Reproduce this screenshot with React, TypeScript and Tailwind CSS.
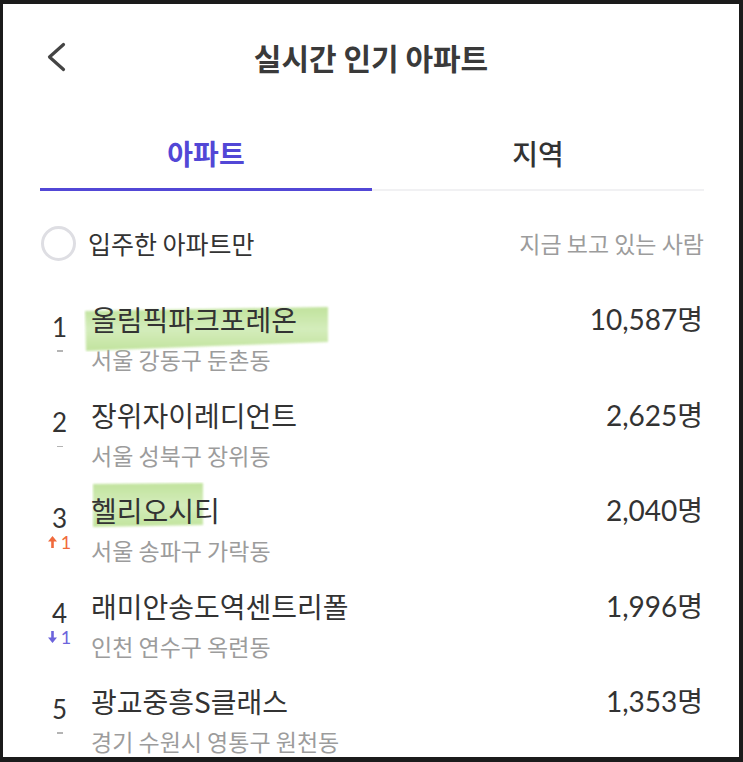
import React from "react";

const KR = "font-['Noto_Sans_CJK_KR',sans-serif]";
const NUM = "font-['Lato','Noto_Sans_CJK_KR',sans-serif]";

type Row = {
  rank: number;
  change: "none" | "up" | "down";
  delta?: number;
  name: string;
  area: string;
  count: string;
  hl?: "wide" | "short";
};

const rows: Row[] = [
  { rank: 1, change: "none", name: "올림픽파크포레온", area: "서울 강동구 둔촌동", count: "10,587명", hl: "wide" },
  { rank: 2, change: "none", name: "장위자이레디언트", area: "서울 성북구 장위동", count: "2,625명" },
  { rank: 3, change: "up", delta: 1, name: "헬리오시티", area: "서울 송파구 가락동", count: "2,040명", hl: "short" },
  { rank: 4, change: "down", delta: 1, name: "래미안송도역센트리폴", area: "인천 연수구 옥련동", count: "1,996명" },
  { rank: 5, change: "none", name: "광교중흥S클래스", area: "경기 수원시 영통구 원천동", count: "1,353명" },
];

function Arrow({ dir, color }: { dir: "up" | "down"; color: string }) {
  return (
    <svg width="9" height="12" viewBox="0 0 9 12" className={dir === "down" ? "rotate-180" : ""}>
      <path d="M4.5 0 L9 5.5 H5.8 V12 H3.2 V5.5 H0 Z" fill={color} />
    </svg>
  );
}

function Highlight({ kind }: { kind: "wide" | "short" }) {
  if (kind === "wide") {
    return (
      <svg
        className="absolute left-[-7px] top-[2px] z-0 pointer-events-none"
        width="246"
        height="48"
        viewBox="0 0 246 48"
      >
        <defs>
          <linearGradient id="g1" x1="0" y1="0" x2="0" y2="1">
            <stop offset="0" stopColor="#b6de8c" />
            <stop offset="0.5" stopColor="#cdeab0" />
            <stop offset="1" stopColor="#b8df8e" />
          </linearGradient>
          <filter id="b1">
            <feGaussianBlur stdDeviation="0.8" />
          </filter>
        </defs>
        <path d="M1 7 L120 5 L244 3 L244 38 L130 42 L2 47 Z" fill="url(#g1)" opacity="0.85" filter="url(#b1)" />
      </svg>
    );
  }
  return (
    <svg
      className="absolute left-[1px] top-[-11px] z-0 pointer-events-none"
      width="113"
      height="47"
      viewBox="0 0 113 47"
    >
      <defs>
        <linearGradient id="g2" x1="0" y1="0" x2="0" y2="1">
          <stop offset="0" stopColor="#b6de8c" />
          <stop offset="0.5" stopColor="#cdeab0" />
          <stop offset="1" stopColor="#b8df8e" />
        </linearGradient>
        <filter id="b2">
          <feGaussianBlur stdDeviation="0.8" />
        </filter>
      </defs>
      <path d="M1 2 L111 1 L111 43 L1 45 Z" fill="url(#g2)" opacity="0.85" filter="url(#b2)" />
    </svg>
  );
}

function RankCol({ r }: { r: Row }) {
  return (
    <div className="w-[39px] flex flex-col items-center shrink-0">
      <div className={`${NUM} text-[26px] leading-[26px] text-[#333333]`}>{r.rank}</div>
      <div className="h-[22px] flex items-center justify-center">
        {r.change === "none" && <div className="w-[6px] h-[1.5px] bg-[#b4b4b4]" />}
        {r.change === "up" && (
          <div className="flex items-center gap-[4px] text-[#f06a3c]">
            <Arrow dir="up" color="#f06a3c" />
            <span className={`${NUM} text-[18px] leading-[18px]`}>{r.delta}</span>
          </div>
        )}
        {r.change === "down" && (
          <div className="flex items-center gap-[4px] text-[#6c64dc]">
            <Arrow dir="down" color="#6c64dc" />
            <span className={`${NUM} text-[18px] leading-[18px]`}>{r.delta}</span>
          </div>
        )}
      </div>
    </div>
  );
}

export default function App() {
  return (
    <div className="w-[743px] h-[762px] bg-[#1b1b1b] pt-[4px] pl-[3px] pr-[4px] pb-[5px] overflow-hidden">
      <div className={`bg-white h-full overflow-hidden ${KR}`}>
        {/* header */}
        <div className="h-[106px] grid grid-cols-[1fr_auto_1fr] items-center pl-[43px]">
          <div className="flex items-center">
            <svg width="20" height="30" viewBox="0 0 20 30">
              <polyline points="17.5,2.5 3.5,15 17.5,27.5" fill="none" stroke="#444444" strokeWidth="3.2" strokeLinecap="round" strokeLinejoin="round" />
            </svg>
          </div>
          <div className="text-[30px] font-bold text-[#3a3a3a] leading-none pr-[43px]">실시간 인기 아파트</div>
          <div />
        </div>

        {/* tabs */}
        <div className="pl-[37px] pr-[35px] flex">
          <div className="flex-1 flex flex-col">
            <div className="h-[78px] pt-[8px] flex items-center justify-center text-[28px] font-semibold text-[#5247d6]">아파트</div>
            <div className="h-[3px] bg-[#5247d6]" />
          </div>
          <div className="flex-1 flex flex-col">
            <div className="h-[78px] pt-[8px] flex items-center justify-center text-[28px] font-medium text-[#333333]">지역</div>
            <div className="h-[3px] flex items-end">
              <div className="h-[2px] w-full bg-[#f1f1f3]" />
            </div>
          </div>
        </div>

        {/* filter row */}
        <div className="pl-[37px] pr-[35px] pt-[35px] flex items-center justify-between">
          <div className="flex items-center h-[35px]">
            <div className="ml-[1px] w-[35px] h-[35px] rounded-full border-[3px] border-[#dedee3]" />
            <span className="ml-[12px] text-[25px] text-[#333333]">입주한 아파트만</span>
          </div>
          <span className="text-[23px] text-[#9c9c9c]">지금 보고 있는 사람</span>
        </div>

        {/* list */}
        <div className="pl-[37px] pr-[35px] mt-[29px] flex flex-col">
          {rows.map((r) => (
            <div key={r.rank} className="h-[95.5px] flex items-center shrink-0">
              <RankCol r={r} />
              <div className="ml-[12px] flex-1 flex flex-col">
                <div className="flex items-center justify-between">
                  <div className="relative">
                    {r.hl && <Highlight kind={r.hl} />}
                    <span className="relative z-10 text-[28px] leading-[34px] text-[#333333]">{r.name}</span>
                  </div>
                  <span className={`${NUM} text-[28px] leading-[34px] text-[#333333] mr-[1px]`}>{r.count}</span>
                </div>
                <div className="mt-[9px] text-[23px] leading-[28px] text-[#9c9c9c]">{r.area}</div>
              </div>
            </div>
          ))}
        </div>
      </div>
    </div>
  );
}
